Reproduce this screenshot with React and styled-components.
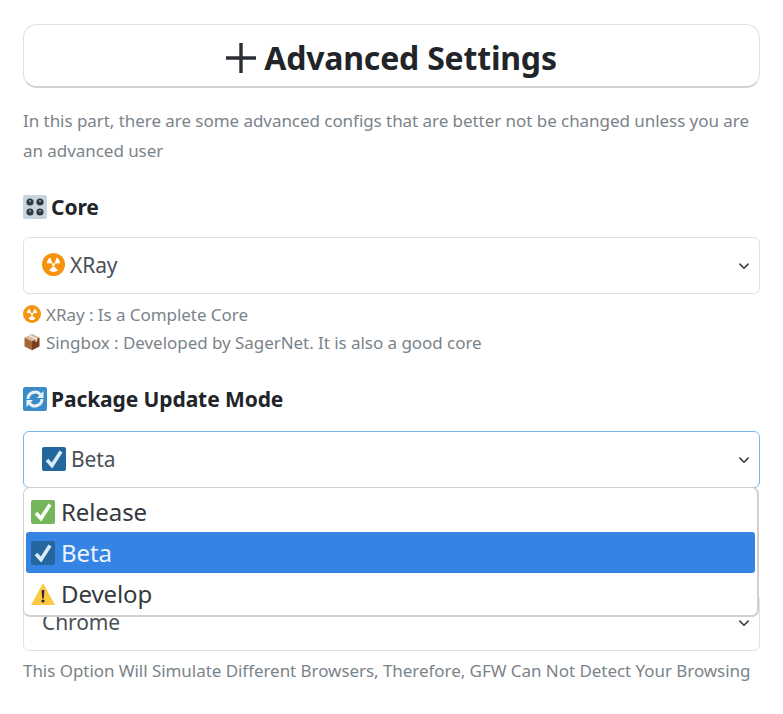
import styled, { createGlobalStyle } from 'styled-components';

const GlobalStyle = createGlobalStyle`
  * { box-sizing: border-box; }
  html, body { margin: 0; background: #fff; }
  body { font-family: 'Noto Sans', 'Open Sans', sans-serif; color: #212529; }
`;

function RadioactiveIcon({ size }) {
  return (
    <svg width={size} height={size} viewBox="0 0 24 24">
      <circle cx="12" cy="12" r="12" fill="#f7930e" />
      <path d="M11 11 L5.2 10.6 A7 7 0 0 1 8.6 4.6 Z M13 11 L15.4 4.6 A7 7 0 0 1 18.8 10.6 Z M12 13.5 L16.6 18 A7 7 0 0 1 7.4 18 Z" fill="#fff" />
      <circle cx="12" cy="12" r="1.6" fill="#fff" />
    </svg>
  );
}

function PackageIcon({ size }) {
  return (
    <svg width={size} height={size} viewBox="0 0 24 24">
      <path d="M12 1 L22 6 L12 11 L2 6 Z" fill="#d9b79c" />
      <path d="M2 6 L12 11 V23 L2 18 Z" fill="#a5673a" />
      <path d="M22 6 L12 11 V23 L22 18 Z" fill="#7a3f1d" />
      <path d="M6 3.5 L16.5 8.7 V12 L19 11 V7.3 L8.5 2.2 Z" fill="#efe3d6" />
    </svg>
  );
}

function CheckboxIcon({ size, color, mark = '#dbeaf7' }) {
  return (
    <svg width={size} height={size} viewBox="0 0 24 24">
      <rect width="24" height="24" rx="2" fill={color} />
      <path d="M5 13 L10 18.5 L19 4.5" fill="none" stroke={mark} strokeWidth="3.6" />
    </svg>
  );
}

function WarningIcon({ size }) {
  return (
    <svg width={size} height={size} viewBox="0 0 24 24">
      <path d="M12 1 L24 23 H0 Z" fill="#fdc944" />
      <path d="M10.6 8 H13.4 L12.8 16.5 H11.2 Z" fill="#2b2b2b" />
      <circle cx="12" cy="19" r="1.6" fill="#2b2b2b" />
    </svg>
  );
}

function RefreshIcon({ size }) {
  return (
    <svg width={size} height={size} viewBox="0 0 24 24">
      <rect width="24" height="24" rx="2" fill="#3a8cc9" />
      <path d="M5 12 A7 7 0 0 1 17.5 7.8" fill="none" stroke="#e6f2fa" strokeWidth="3" />
      <path d="M19 12 A7 7 0 0 1 6.5 16.2" fill="none" stroke="#e6f2fa" strokeWidth="3" />
      <path d="M20.5 4 V11 H14 Z M3.5 20 V13 H10 Z" fill="#e6f2fa" />
    </svg>
  );
}

function ControlKnobsIcon({ size }) {
  const knobs = [[7, 7], [17, 7], [7, 17], [17, 17]];
  return (
    <svg width={size} height={size} viewBox="0 0 24 24">
      <rect width="24" height="24" rx="2" fill="#c6d5df" />
      {knobs.map(([cx, cy]) => (
        <g key={`${cx}-${cy}`}>
          <circle cx={cx} cy={cy} r="3.6" fill="#2f3a42" />
          <circle cx={cx} cy={cy - 1} r="1.1" fill="#8fa3b0" />
        </g>
      ))}
    </svg>
  );
}

function Chevron() {
  return (
    <svg width="12" height="12" viewBox="0 0 16 16">
      <path d="M2.5 5.5 L8 11 L13.5 5.5" fill="none" stroke="#343a40" strokeWidth="2" strokeLinecap="round" strokeLinejoin="round" />
    </svg>
  );
}

export default function App() {
  return (
    <Page>
      <GlobalStyle />
      <AccordionButton>
        <PlusSign viewBox="0 0 30 30">
          <path d="M15 0 V30 M0 15 H30" stroke="#2a2e33" strokeWidth="3.4" />
        </PlusSign>
        Advanced Settings
      </AccordionButton>
      <Intro>
        In this part, there are some advanced configs that are better not be changed unless you are an advanced user
      </Intro>

      <Label $top={27} $bottom={16}><ControlKnobsIcon size={24} /> Core</Label>
      <Select>
        <SelectValue><RadioactiveIcon size={23} /> XRay</SelectValue>
        <Chevron />
      </Select>
      <Hints $top={6}>
        <Hint><RadioactiveIcon size={18} /> XRay : Is a Complete Core</Hint>
        <Hint><PackageIcon size={18} /> Singbox : Developed by SagerNet. It is also a good core</Hint>
      </Hints>

      <Label $top={29} $bottom={18}><RefreshIcon size={24} /> Package Update Mode</Label>
      <DropdownAnchor>
        <Select $focused>
          <SelectValue><CheckboxIcon size={24} color="#24679f" /> Beta</SelectValue>
          <Chevron />
        </Select>
        <OptionList>
          <Option><CheckboxIcon size={24} color="#76b65a" mark="#fff" /> Release</Option>
          <Option $selected><CheckboxIcon size={24} color="#24679f" /> Beta</Option>
          <Option><WarningIcon size={24} /> Develop</Option>
        </OptionList>
      </DropdownAnchor>

      <HiddenGap />
      <Select>
        <SelectValue>Chrome</SelectValue>
        <Chevron />
      </Select>
      <Hints $top={5}>
        <Hint>This Option Will Simulate Different Browsers, Therefore, GFW Can Not Detect Your Browsing</Hint>
      </Hints>
    </Page>
  );
}

const Page = styled.div`
  width: 783px;
  height: 714px;
  padding: 24px 23px 0;
  overflow: hidden;
`;

const AccordionButton = styled.div`
  display: flex;
  align-items: center;
  justify-content: center;
  gap: 8px;
  width: 737px;
  height: 64px;
  padding-top: 4px;
  background: #fff;
  border: 1px solid #dfe1e4;
  border-bottom: 2px solid #cfd1d3;
  border-radius: 14px;
  font-size: 32px;
  font-weight: 700;
  letter-spacing: -0.2px;
  color: #212529;
`;

const PlusSign = styled.svg`
  width: 30px;
  height: 30px;
`;

const Intro = styled.p`
  margin: 18px 0 0;
  font-size: 17px;
  line-height: 30px;
  letter-spacing: -0.05px;
  color: #7b838a;
`;

const Label = styled.div`
  display: flex;
  align-items: center;
  gap: 4px;
  height: 28px;
  margin: ${({ $top }) => $top}px 0 ${({ $bottom }) => $bottom}px;
  font-size: 21px;
  font-weight: 700;
  letter-spacing: -0.1px;
  color: #212529;
`;

const Select = styled.div`
  display: flex;
  align-items: center;
  justify-content: space-between;
  width: 737px;
  height: 57px;
  padding: 0 9px 0 18px;
  background: #fff;
  border: 1px solid ${({ $focused }) => ($focused ? '#7ab4f5' : '#dee2e6')};
  border-radius: 6px;
`;

const SelectValue = styled.div`
  display: flex;
  align-items: center;
  gap: 5px;
  margin-bottom: 2px;
  font-size: 21px;
  letter-spacing: -0.1px;
  color: #495057;
`;

const Hints = styled.div`
  margin-top: ${({ $top }) => $top}px;
`;

const Hint = styled.div`
  display: flex;
  align-items: center;
  gap: 5px;
  height: 28px;
  font-size: 17px;
  letter-spacing: -0.05px;
  white-space: nowrap;
  color: #7b838a;
`;

const DropdownAnchor = styled.div`
  position: relative;
`;

const OptionList = styled.div`
  position: absolute;
  top: 56px;
  left: 0;
  z-index: 2;
  display: flex;
  flex-direction: column;
  width: 736px;
  height: 130px;
  padding: 3px 2px 1px;
  background: #fff;
  border: 1px solid #d4cfcb;
  border-bottom-width: 2px;
  border-right-width: 2px;
  border-radius: 7px;
`;

const Option = styled.div`
  display: flex;
  align-items: center;
  gap: 6px;
  height: 41px;
  padding-left: 5px;
  border-radius: 3px;
  font-size: 24px;
  letter-spacing: -0.1px;
  background: ${({ $selected }) => ($selected ? '#3584e4' : 'transparent')};
  color: ${({ $selected }) => ($selected ? '#eaf2fd' : '#343a40')};
`;

const HiddenGap = styled.div`
  height: 106px;
`;
